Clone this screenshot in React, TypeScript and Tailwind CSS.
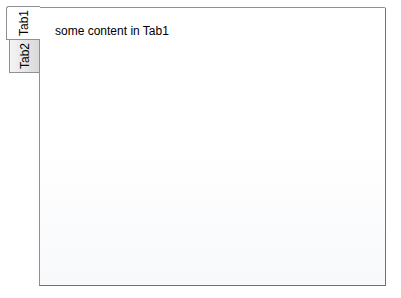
import React from "react";

export default function App() {
  return (
    <div className="w-[401px] h-[298px] bg-white flex items-start pt-[6px] pl-[6px] font-['Liberation_Sans',Arial,sans-serif] text-[12px] text-black">
      <div className="flex flex-col w-[33px] shrink-0 items-start">
        <div className="relative z-10 w-[34px] h-[34px] bg-white border border-r-0 border-[#8d9096] rounded-tl-[3px] flex items-center justify-center">
          <span className="[writing-mode:vertical-rl] rotate-180 leading-none">Tab1</span>
        </div>
        <div className="-mt-px ml-[3px] w-[30px] h-[34px] border border-r-0 border-[#8d9096] bg-gradient-to-r from-[#f4f4f4] to-[#d9d9d9] flex items-center justify-center">
          <span className="[writing-mode:vertical-rl] rotate-180 leading-none">Tab2</span>
        </div>
      </div>
      <div className="mt-px w-[347px] h-[279px] border border-[#8d9096] border-r-[#6e7278] border-b-[#6e7278] rounded-tr-[2px] bg-gradient-to-b from-white via-white to-[#f8f9fb] pl-[15px] pt-[14px]">
        <div>some content in Tab1</div>
      </div>
    </div>
  );
}
